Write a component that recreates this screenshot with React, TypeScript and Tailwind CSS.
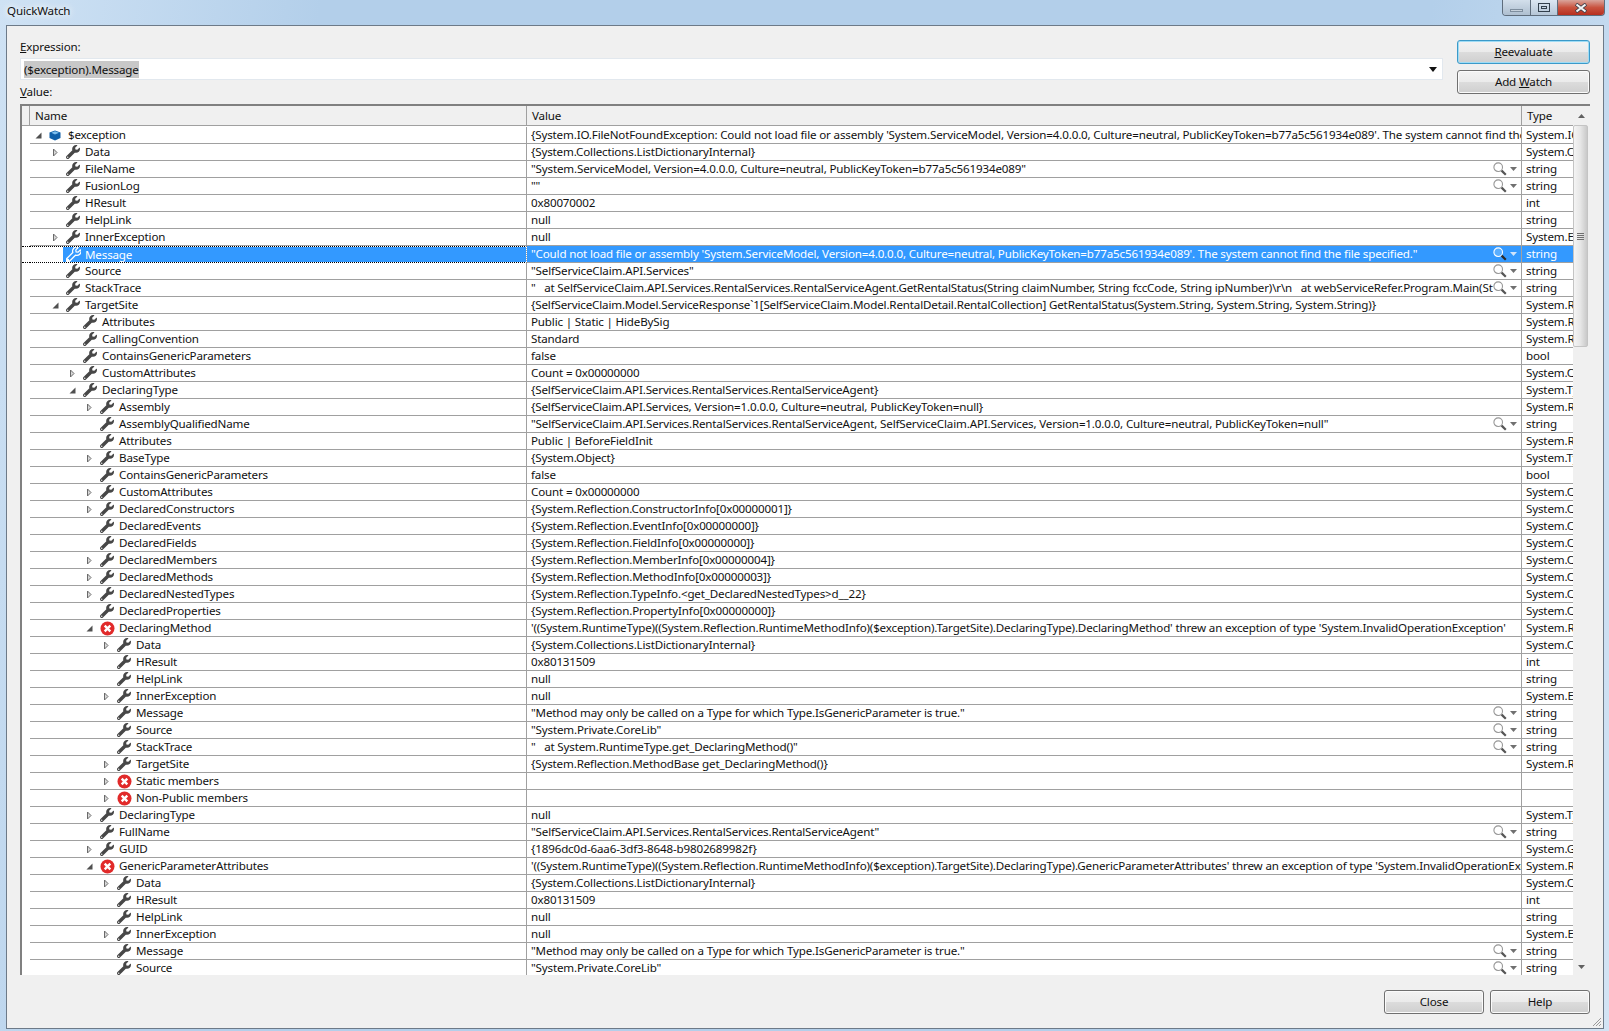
import { FaWrench } from "react-icons/fa";

type Row = {
  level: number;
  name: string;
  value?: string;
  type?: string;
  state?: "open" | "closed";
  icon?: "error" | "cube";
  inspect?: boolean;
  selected?: boolean;
};

const exceptionText =
  "'((System.RuntimeType)((System.Reflection.RuntimeMethodInfo)($exception).TargetSite).DeclaringType).";

const rows: Row[] = [
  { level: 0, name: "$exception", state: "open", icon: "cube", type: "System.IO.FileNotFoundException", value: "{System.IO.FileNotFoundException: Could not load file or assembly 'System.ServiceModel, Version=4.0.0.0, Culture=neutral, PublicKeyToken=b77a5c561934e089'. The system cannot find the file specified.}" },
  { level: 1, name: "Data", state: "closed", value: "{System.Collections.ListDictionaryInternal}", type: "System.Collections" },
  { level: 1, name: "FileName", value: '"System.ServiceModel, Version=4.0.0.0, Culture=neutral, PublicKeyToken=b77a5c561934e089"', type: "string", inspect: true },
  { level: 1, name: "FusionLog", value: '""', type: "string", inspect: true },
  { level: 1, name: "HResult", value: "0x80070002", type: "int" },
  { level: 1, name: "HelpLink", value: "null", type: "string" },
  { level: 1, name: "InnerException", state: "closed", value: "null", type: "System.Exception" },
  { level: 1, name: "Message", value: "\"Could not load file or assembly 'System.ServiceModel, Version=4.0.0.0, Culture=neutral, PublicKeyToken=b77a5c561934e089'. The system cannot find the file specified.\"", type: "string", inspect: true, selected: true },
  { level: 1, name: "Source", value: '"SelfServiceClaim.API.Services"', type: "string", inspect: true },
  { level: 1, name: "StackTrace", value: '"   at SelfServiceClaim.API.Services.RentalServices.RentalServiceAgent.GetRentalStatus(String claimNumber, String fccCode, String ipNumber)\\r\\n   at webServiceRefer.Program.Main(String[] args)"', type: "string", inspect: true },
  { level: 1, name: "TargetSite", state: "open", value: "{SelfServiceClaim.Model.ServiceResponse`1[SelfServiceClaim.Model.RentalDetail.RentalCollection] GetRentalStatus(System.String, System.String, System.String)}", type: "System.Reflection" },
  { level: 2, name: "Attributes", value: "Public | Static | HideBySig", type: "System.Reflection" },
  { level: 2, name: "CallingConvention", value: "Standard", type: "System.Reflection" },
  { level: 2, name: "ContainsGenericParameters", value: "false", type: "bool" },
  { level: 2, name: "CustomAttributes", state: "closed", value: "Count = 0x00000000", type: "System.Collections" },
  { level: 2, name: "DeclaringType", state: "open", value: "{SelfServiceClaim.API.Services.RentalServices.RentalServiceAgent}", type: "System.Type" },
  { level: 3, name: "Assembly", state: "closed", value: "{SelfServiceClaim.API.Services, Version=1.0.0.0, Culture=neutral, PublicKeyToken=null}", type: "System.Reflection" },
  { level: 3, name: "AssemblyQualifiedName", value: '"SelfServiceClaim.API.Services.RentalServices.RentalServiceAgent, SelfServiceClaim.API.Services, Version=1.0.0.0, Culture=neutral, PublicKeyToken=null"', type: "string", inspect: true },
  { level: 3, name: "Attributes", value: "Public | BeforeFieldInit", type: "System.Reflection" },
  { level: 3, name: "BaseType", state: "closed", value: "{System.Object}", type: "System.Type" },
  { level: 3, name: "ContainsGenericParameters", value: "false", type: "bool" },
  { level: 3, name: "CustomAttributes", state: "closed", value: "Count = 0x00000000", type: "System.Collections" },
  { level: 3, name: "DeclaredConstructors", state: "closed", value: "{System.Reflection.ConstructorInfo[0x00000001]}", type: "System.Collections" },
  { level: 3, name: "DeclaredEvents", value: "{System.Reflection.EventInfo[0x00000000]}", type: "System.Collections" },
  { level: 3, name: "DeclaredFields", value: "{System.Reflection.FieldInfo[0x00000000]}", type: "System.Collections" },
  { level: 3, name: "DeclaredMembers", state: "closed", value: "{System.Reflection.MemberInfo[0x00000004]}", type: "System.Collections" },
  { level: 3, name: "DeclaredMethods", state: "closed", value: "{System.Reflection.MethodInfo[0x00000003]}", type: "System.Collections" },
  { level: 3, name: "DeclaredNestedTypes", state: "closed", value: "{System.Reflection.TypeInfo.<get_DeclaredNestedTypes>d__22}", type: "System.Collections" },
  { level: 3, name: "DeclaredProperties", value: "{System.Reflection.PropertyInfo[0x00000000]}", type: "System.Collections" },
  { level: 3, name: "DeclaringMethod", state: "open", icon: "error", value: exceptionText + "DeclaringMethod' threw an exception of type 'System.InvalidOperationException'", type: "System.Reflection" },
  { level: 4, name: "Data", state: "closed", value: "{System.Collections.ListDictionaryInternal}", type: "System.Collections" },
  { level: 4, name: "HResult", value: "0x80131509", type: "int" },
  { level: 4, name: "HelpLink", value: "null", type: "string" },
  { level: 4, name: "InnerException", state: "closed", value: "null", type: "System.Exception" },
  { level: 4, name: "Message", value: '"Method may only be called on a Type for which Type.IsGenericParameter is true."', type: "string", inspect: true },
  { level: 4, name: "Source", value: '"System.Private.CoreLib"', type: "string", inspect: true },
  { level: 4, name: "StackTrace", value: '"   at System.RuntimeType.get_DeclaringMethod()"', type: "string", inspect: true },
  { level: 4, name: "TargetSite", state: "closed", value: "{System.Reflection.MethodBase get_DeclaringMethod()}", type: "System.Reflection" },
  { level: 4, name: "Static members", state: "closed", icon: "error" },
  { level: 4, name: "Non-Public members", state: "closed", icon: "error" },
  { level: 3, name: "DeclaringType", state: "closed", value: "null", type: "System.Type" },
  { level: 3, name: "FullName", value: '"SelfServiceClaim.API.Services.RentalServices.RentalServiceAgent"', type: "string", inspect: true },
  { level: 3, name: "GUID", state: "closed", value: "{1896dc0d-6aa6-3df3-8648-b9802689982f}", type: "System.Guid" },
  { level: 3, name: "GenericParameterAttributes", state: "open", icon: "error", value: exceptionText + "GenericParameterAttributes' threw an exception of type 'System.InvalidOperationException'", type: "System.Reflection" },
  { level: 4, name: "Data", state: "closed", value: "{System.Collections.ListDictionaryInternal}", type: "System.Collections" },
  { level: 4, name: "HResult", value: "0x80131509", type: "int" },
  { level: 4, name: "HelpLink", value: "null", type: "string" },
  { level: 4, name: "InnerException", state: "closed", value: "null", type: "System.Exception" },
  { level: 4, name: "Message", value: '"Method may only be called on a Type for which Type.IsGenericParameter is true."', type: "string", inspect: true },
  { level: 4, name: "Source", value: '"System.Private.CoreLib"', type: "string", inspect: true },
];

function Expander({ state }: { state?: "open" | "closed" }) {
  if (state === "open") {
    return (
      <svg width="9" height="9" viewBox="0 0 9 9">
        <path d="M7.5 1.5V7.5H1.5Z" fill="#505050" />
      </svg>
    );
  }
  if (state === "closed") {
    return (
      <svg width="9" height="9" viewBox="0 0 9 9">
        <path d="M2.5 1L6 4.5L2.5 8Z" fill="#d8d8d8" stroke="#6a6a6a" />
      </svg>
    );
  }
  return null;
}

function ErrorIcon() {
  return (
    <svg width="15" height="15" viewBox="0 0 15 15">
      <circle cx="7.5" cy="7.5" r="7" fill="#e12a2a" />
      <path d="M4.7 4.7L10.3 10.3M10.3 4.7L4.7 10.3" stroke="#fff" strokeWidth="2.4" />
    </svg>
  );
}

function CubeIcon() {
  return (
    <svg width="12" height="11" viewBox="0 0 12 11">
      <path d="M6 0.5L11.5 2.5V8L6 10.5L0.5 8V2.5Z" fill="#0f5fa8" />
      <path d="M6 1.2L10 2.8L6 4.6L2.4 2.8Z" fill="#7fc0ee" />
    </svg>
  );
}

function RowIcon({ row }: { row: Row }) {
  if (row.icon === "error") return <ErrorIcon />;
  if (row.icon === "cube") return <CubeIcon />;
  if (row.selected) {
    return <FaWrench size={15} color="#3399ff" stroke="#fff" strokeWidth={42} />;
  }
  return <FaWrench size={14} color="#474747" />;
}

function Inspect({ selected }: { selected?: boolean }) {
  return (
    <span className={`flex h-full shrink-0 items-center gap-[3px] pr-[4px] ${selected ? "bg-[#3399ff]" : "bg-white"}`}>
      <svg width="14" height="14" viewBox="0 0 14 14">
        <circle cx="5.2" cy="5.2" r="4.3" fill={selected ? "#5aaeff" : "#fff"} stroke={selected ? "#fff" : "#969696"} strokeWidth="1.1" />
        <path d="M8.6 8.6L12.8 12.8" stroke={selected ? "#2a2a2a" : "#555"} strokeWidth="2.2" />
      </svg>
      <svg width="7" height="4" viewBox="0 0 7 4">
        <path d="M0 0H7L3.5 4Z" fill={selected ? "#cfe4fb" : "#707070"} />
      </svg>
    </span>
  );
}

function TreeRow({ row }: { row: Row }) {
  const lineColor = "border-[#a0a0a0]";
  const text = row.selected ? "text-white" : "text-[#111]";
  const fill = row.selected ? "bg-[#3399ff]" : "";
  return (
    <div className={`flex h-[17px] ${text}`}>
      <div className={`w-[8px] ${row.selected ? "border-y border-dotted border-black" : ""}`} />
      <div className={`flex w-[497px] border-r border-b ${lineColor} ${row.selected ? "border-t border-t-black border-b-black border-dotted" : ""}`}>
        <div className="flex items-center" style={{ paddingLeft: 3 + row.level * 17 }}>
          <span className="flex w-[10px] justify-center">
            <Expander state={row.state} />
          </span>
        </div>
        <div className={`flex min-w-0 flex-1 items-center ${row.selected ? "ml-[3px]" : "ml-[6px]"}`}>
          <span className={`flex h-full shrink-0 items-center ${row.selected ? "w-[21px] justify-center bg-[#3399ff]" : "w-[18px]"}`}>
            <RowIcon row={row} />
          </span>
          <span className={`flex h-full flex-1 items-center whitespace-nowrap pl-px ${fill}`}>
            {row.name}
          </span>
        </div>
      </div>
      <div className={`flex w-[995px] items-center overflow-hidden border-r border-b pl-[4px] ${lineColor} ${fill}`}>
        <span className="min-w-0 flex-1 overflow-hidden whitespace-pre">{row.value}</span>
        {row.inspect && <Inspect selected={row.selected} />}
      </div>
      <div className={`flex w-[51px] items-center overflow-hidden whitespace-pre border-b pl-[4px] ${lineColor} ${fill}`}>
        {row.type}
      </div>
    </div>
  );
}

function Scrollbar() {
  return (
    <div className="flex h-full w-[17px] flex-col bg-[#f0f0f0]">
      <div className="flex h-[19px] items-center justify-center">
        <svg width="7" height="4" viewBox="0 0 7 4">
          <path d="M3.5 0L7 4H0Z" fill="#606060" />
        </svg>
      </div>
      <div className="flex h-[222px] w-[15px] flex-col items-center justify-center gap-px rounded-[2px] border border-[#c4c4c4] bg-[linear-gradient(90deg,#f4f4f4,#e6e6e6_50%,#c9c9c9)]">
        <span className="h-px w-[7px] bg-[#6f6f6f]" />
        <span className="h-px w-[7px] bg-[#6f6f6f]" />
        <span className="h-px w-[7px] bg-[#6f6f6f]" />
        <span className="h-px w-[7px] bg-[#6f6f6f]" />
      </div>
      <div className="flex-1" />
      <div className="flex h-[17px] items-center justify-center">
        <svg width="7" height="4" viewBox="0 0 7 4">
          <path d="M0 0H7L3.5 4Z" fill="#606060" />
        </svg>
      </div>
    </div>
  );
}

function Button({ children, focused, width }: { children: React.ReactNode; focused?: boolean; width: string }) {
  return (
    <button
      type="button"
      className={`h-[24px] ${width} rounded-[3px] border bg-[linear-gradient(180deg,#f3f3f3,#ebebeb_48%,#dcdcdc_50%,#cfcfcf)] text-[#111] ${
        focused ? "border-[#3c9ac9] shadow-[inset_0_0_0_1px_#9fdcf5]" : "border-[#707070] shadow-[inset_0_0_0_1px_#fbfbfb]"
      }`}
    >
      {children}
    </button>
  );
}

function Header() {
  const cell = "flex items-center border-r border-[#a0a0a0] pl-[5px]";
  return (
    <div className="flex h-[20px] border-b border-[#a0a0a0] bg-[#f0f0f0] text-[#111]">
      <div className="w-[8px] border-r border-[#a0a0a0]" />
      <div className={`${cell} w-[497px]`}>Name</div>
      <div className={`${cell} w-[995px]`}>Value</div>
      <div className="flex w-[51px] items-center pl-[5px]">Type</div>
    </div>
  );
}

function TitleBar() {
  return (
    <div className="flex h-[25px] items-start justify-between pr-[4px]">
      <span className="pl-[7px] pt-[2px] leading-[18px] text-[#111] [text-shadow:0_0_6px_#fff,0_0_10px_#fff]">
        QuickWatch
      </span>
      <div className="flex h-[16px] overflow-hidden rounded-b-[4px] border border-t-0 border-[#5f6d7c]">
        <div className="flex w-[28px] items-end justify-center border-r border-[#5f6d7c] bg-[linear-gradient(180deg,#d3dfeb,#aebfd0)] pb-[3px]">
          <span className="h-[3px] w-[13px] border border-[#7e8e9e] bg-[#c6d1dc]" />
        </div>
        <div className="flex w-[27px] items-center justify-center border-r border-[#5f6d7c] bg-[linear-gradient(180deg,#dce7f2,#b5c6d7)]">
          <span className="h-[9px] w-[12px] border border-[#33404d] p-px">
            <span className="block h-[3px] w-[6px] translate-x-[1px] translate-y-[1px] border border-[#33404d]" />
          </span>
        </div>
        <div className="flex w-[46px] items-center justify-center bg-[linear-gradient(180deg,#d9a59c,#c9533f_50%,#b62f1f)]">
          <svg width="14" height="10" viewBox="0 0 14 10">
            <path d="M2 1L12 9M12 1L2 9" stroke="#40404a" strokeWidth="3.6" />
            <path d="M2.5 1.5L11.5 8.5M11.5 1.5L2.5 8.5" stroke="#f4f4f4" strokeWidth="2.2" />
          </svg>
        </div>
      </div>
    </div>
  );
}

export default function App() {
  return (
    <div className="relative h-[1031px] w-[1609px] overflow-hidden bg-[linear-gradient(100deg,#cfe2f4_0%,#b3cfea_18%,#b3cfea_80%,#d3e4f4_100%)] font-['Noto_Sans',sans-serif] text-[11.6px] leading-[16px] tracking-[-0.16px]">
      <TitleBar />
      <div className="ml-[6px] h-[1004px] w-[1598px] border border-[#6d7a88] bg-[#f0f0f0] px-[13px] pt-[14px]">
        <div className="flex items-start gap-[14px]">
          <div className="h-[64px] w-[1423px] text-[#111]">
            <div className="h-[18px] leading-[14px]">
              <span className="underline">E</span>xpression:
            </div>
            <div className="flex h-[22px] items-center justify-between border border-[#e2e8ee] bg-white pl-[3px] pr-[5px]">
              <span className="bg-[#c8c8c8] leading-[17px]">($exception).Message</span>
              <svg width="8" height="5" viewBox="0 0 8 5">
                <path d="M0 0H8L4 5Z" fill="#111" />
              </svg>
            </div>
            <div className="pt-[5px] leading-[14px]">
              <span className="underline">V</span>alue:
            </div>
          </div>
          <div className="flex w-[133px] flex-col gap-[6px]">
            <Button focused width="w-full">
              <span className="underline">R</span>eevaluate
            </Button>
            <Button width="w-full">
              Add <span className="underline">W</span>atch
            </Button>
          </div>
        </div>

        <div className="flex h-[871px] w-[1570px] overflow-hidden border-t-2 border-l-2 border-[#808080] bg-white">
          <div className="w-[1551px]">
            <Header />
            <div className="pt-px">
              {rows.map((row, i) => (
                <TreeRow key={i} row={row} />
              ))}
            </div>
          </div>
          <Scrollbar />
        </div>

        <div className="flex justify-end gap-[6px] pt-[15px]">
          <Button width="w-[100px]">Close</Button>
          <Button width="w-[100px]">Help</Button>
        </div>
      </div>
      <svg className="absolute left-[1592px] top-[1017px]" width="10" height="10" viewBox="0 0 10 10">
        <path d="M9 1L1 9M9 4L4 9M9 7L7 9" stroke="#9a9a9a" strokeWidth="1" />
      </svg>
    </div>
  );
}
